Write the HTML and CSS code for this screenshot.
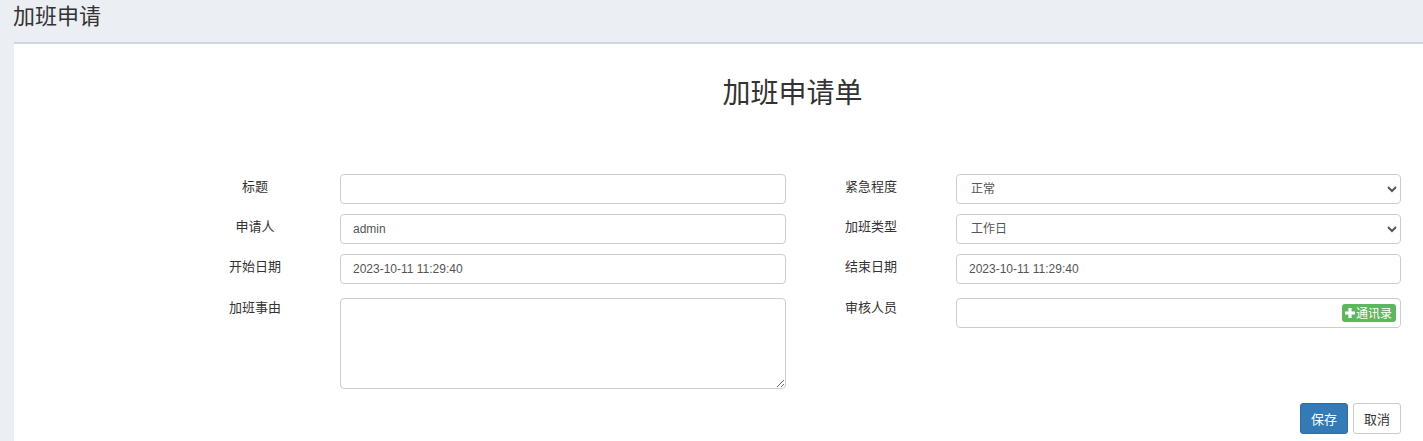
FILE: index.html
```html
<!DOCTYPE html>
<html lang="zh-CN">
<head>
    <meta charset="UTF-8">
    <title>加班申请</title>
    <link rel="stylesheet" href="styles.css">
</head>
<body>
<div class="content-header">
    <h1>加班申请</h1>
</div>

<div class="box">
    <h2 class="form-title">加班申请单</h2>

    <form class="apply-form">
        <div class="form-grid">
            <label class="control-label">标题</label>
            <input type="text" class="form-control">
            <label class="control-label">紧急程度</label>
            <select class="form-control">
                <option>正常</option>
                <option>紧急</option>
            </select>

            <label class="control-label">申请人</label>
            <input type="text" class="form-control" value="admin">
            <label class="control-label">加班类型</label>
            <select class="form-control">
                <option>工作日</option>
                <option>节假日</option>
            </select>

            <label class="control-label">开始日期</label>
            <input type="text" class="form-control" value="2023-10-11 11:29:40">
            <label class="control-label">结束日期</label>
            <input type="text" class="form-control" value="2023-10-11 11:29:40">

            <label class="control-label last-row">加班事由</label>
            <textarea class="form-control reason last-row"></textarea>
            <label class="control-label last-row">审核人员</label>
            <div class="picker last-row">
                <input type="text" class="form-control">
                <button type="button" class="btn-contacts">
                    <svg width="10" height="10" viewBox="0 0 10 10"><path d="M3.4 0h3.2v3.4H10v3.2H6.6V10H3.4V6.6H0V3.4h3.4z" fill="#fff"/></svg>通讯录
                </button>
            </div>
        </div>

        <div class="form-actions">
            <button type="button" class="btn btn-primary">保存</button>
            <button type="button" class="btn btn-default">取消</button>
        </div>
    </form>
</div>
</body>
</html>
```

FILE: styles.css
```css
body {
    margin: 0;
    background-color: #ebeef3;
    font-family: "Liberation Sans", "Noto Sans CJK SC", sans-serif;
    color: #333;
    overflow: hidden;
}
.content-header {
    height: 42px;
    padding-left: 13px;
}
.content-header h1 {
    margin: 0;
    font-size: 22px;
    font-weight: normal;
    line-height: 34px;
}
.box {
    margin-left: 14px;
    border-top: 2px solid #d2d6de;
    background-color: #fff;
    padding: 30px 0 7px;
}
.form-title {
    margin: 0 0 0 186px;
    width: 1185px;
    text-align: center;
    font-size: 28px;
    font-weight: normal;
    line-height: 40px;
}
.apply-form {
    margin: 60px 0 0 186px;
    width: 1201px;
}
.form-grid {
    display: grid;
    grid-template-columns: 110px 446px 110px 445px;
    grid-template-rows: 30px 30px 30px auto;
    column-gap: 30px;
    row-gap: 10px;
}
.control-label {
    font-size: 13px;
    line-height: 20px;
    padding-top: 3px;
    text-align: center;
}
.form-control {
    box-sizing: border-box;
    width: 100%;
    height: 30px;
    margin: 0;
    padding: 0 12px;
    border: 1px solid #ccc;
    border-radius: 4px;
    background-color: #fff;
    font-family: "Liberation Sans", "Noto Sans CJK SC", sans-serif;
    font-size: 12px;
    color: #555;
}
select.form-control {
    padding: 0 8px 0 10px;
}
.last-row {
    margin-top: 4px;
}
.control-label.last-row {
    padding-top: 0;
}
.reason {
    display: block;
    height: 91px;
    resize: vertical;
}
.picker {
    position: relative;
    height: 30px;
}
.btn-contacts {
    position: absolute;
    top: 6px;
    right: 5px;
    height: 18px;
    width: 54px;
    padding: 0 3px;
    border: none;
    border-radius: 3px;
    background-color: #5cb85c;
    color: #fff;
    font-family: "Noto Sans CJK SC", sans-serif;
    font-size: 12px;
    line-height: 18px;
    display: flex;
    align-items: center;
    gap: 1px;
}
.form-actions {
    display: flex;
    justify-content: flex-end;
    gap: 5px;
    margin-top: 14px;
}
.btn {
    box-sizing: border-box;
    height: 31px;
    padding: 0 10px;
    border: 1px solid #ccc;
    border-radius: 3px;
    font-family: "Noto Sans CJK SC", sans-serif;
    font-size: 13px;
    cursor: pointer;
}
.btn-primary {
    background-color: #337ab7;
    border-color: #2e6da4;
    color: #fff;
}
.btn-default {
    background-color: #fff;
    color: #333;
}
```
